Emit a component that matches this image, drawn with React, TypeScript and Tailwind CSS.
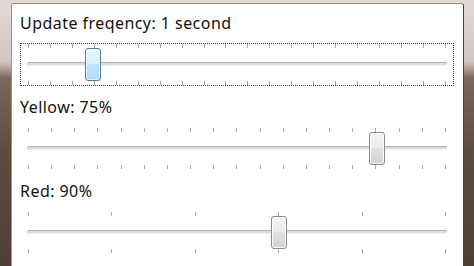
import React from "react";

type SliderProps = {
  ticks: number;
  thumb: number;
  focused?: boolean;
};

function TickRow({ count }: { count: number }) {
  return (
    <div className="flex justify-between px-[7px] h-[4px]">
      {Array.from({ length: count }, (_, i) => (
        <div key={i} className="w-px h-full bg-[#a8a8a8]" />
      ))}
    </div>
  );
}

function Slider({ ticks, thumb, focused }: SliderProps) {
  return (
    <div
      className={
        "relative w-[434px] h-[43px] flex flex-col border border-dotted " +
        (focused ? "border-[#3a3a3a]" : "border-transparent")
      }
    >
      <TickRow count={ticks} />
      <div className="mt-[14px] mx-[6px] h-[3px] rounded-full border-t border-t-[#b4b4b4] bg-[#dcdcdc] shadow-[0_1px_0_#f0f0f0]" />
      <div className="mt-[16px]">
        <TickRow count={ticks} />
      </div>
      {/* thumb sits over the track */}
      <div
        className={
          focused
            ? "absolute top-[4px] w-[16px] h-[33px] rounded-[3px] border border-[#4f7fa6] bg-[linear-gradient(180deg,#eaf6fd_0%,#d9f0fc_48%,#bee6fd_50%,#a9dbf6_100%)] shadow-[inset_0_0_0_1px_rgba(255,255,255,0.7)]"
            : "absolute top-[4px] w-[16px] h-[33px] rounded-[3px] border border-[#8a8a8a] bg-[linear-gradient(180deg,#f4f4f4_0%,#ececec_48%,#e0e0e0_50%,#d2d2d2_100%)] shadow-[inset_0_0_0_1px_rgba(255,255,255,0.8)]"
        }
        style={{ left: thumb - 9 }}
      />
    </div>
  );
}

function Section({
  label,
  ticks,
  thumb,
  focused,
}: {
  label: string;
  ticks: number;
  thumb: number;
  focused?: boolean;
}) {
  return (
    <div className="flex flex-col gap-[10px]">
      <div className="text-[16px] leading-[20px] tracking-[0.45px] text-[#111]">{label}</div>
      <Slider ticks={ticks} thumb={thumb} focused={focused} />
    </div>
  );
}

export default function App() {
  return (
    <div
      className="w-[474px] h-[266px] overflow-hidden pt-[3px] pl-[11px] pr-[10px] bg-[linear-gradient(180deg,#e2dad6_0px,#d2c7c2_62px,#7c675d_78px,#5f4c43_150px,#4e3e37_266px)]"
      style={{ fontFamily: '"Segoe UI", "Noto Sans", "Open Sans", sans-serif' }}
    >
      <div className="h-full flex flex-col gap-[11px] bg-white rounded-t-[3px] border-t border-l border-r border-t-[#958b86] border-l-[#9d938e] border-r-[#4f4039] pl-[8px] pt-[9px]">
        <Section label="Update freqency: 1 second" ticks={20} thumb={73} focused />
        <Section label="Yellow: 75%" ticks={19} thumb={357} />
        <Section label="Red: 90%" ticks={6} thumb={259} />
      </div>
    </div>
  );
}
